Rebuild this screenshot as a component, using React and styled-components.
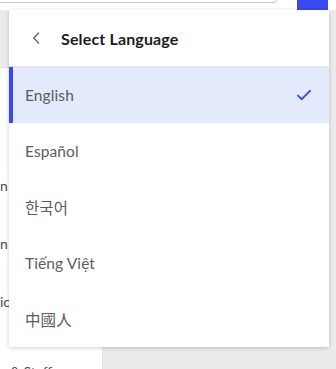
import React from 'react';
import styled, { createGlobalStyle } from 'styled-components';

const GlobalStyle = createGlobalStyle`
	html, body {
		margin: 0;
		padding: 0;
		width: 336px;
		height: 369px;
		overflow: hidden;
		font-family: Lato, "Noto Sans", "Noto Sans CJK KR", "Noto Sans CJK TC", sans-serif;
	}
`;

const Page = styled.div`
	position: relative;
	display: flex;
	flex-direction: column;
	width: 336px;
	height: 369px;
	background-color: #ebebeb;
	overflow: hidden;
`;

const TopBar = styled.div`
	display: flex;
	align-items: flex-end;
	gap: 20px;
	height: 10px;
	background-color: #ffffff;
	overflow: hidden;
	flex-shrink: 0;
`;

const SearchInput = styled.div`
	width: 281px;
	height: 30px;
	margin-left: -4px;
	margin-bottom: 7px;
	border: 1px solid #c8c8c8;
	border-radius: 3px;
	box-sizing: border-box;
`;

const SaveButton = styled.div`
	width: 31px;
	height: 30px;
	background-color: #3a48f2;
	border-radius: 2px 2px 0 0;
`;

const Body = styled.div`
	display: flex;
	flex: 1;
	flex-direction: column;
	padding-top: 57px;
`;

const Sidebar = styled.ul`
	flex: 1;
	width: 102px;
	margin: 0;
	padding: 30px 0 0;
	list-style: none;
	background-color: #ffffff;
	border-top: 1px solid #dcdcdc;
	border-right: 1px solid #e2e2e2;
`;

const SidebarItem = styled.li`
	height: 58px;
	display: flex;
	align-items: center;
	margin-top: ${(props) => (props.gap ? '12px' : '0')};
	padding-left: ${(props) => props.indent}px;
	font-size: 14px;
	color: #4a4a4a;
	white-space: nowrap;
`;

const Menu = styled.div`
	position: absolute;
	top: 10px;
	left: 9px;
	width: 320px;
	background-color: #ffffff;
	border-radius: 0 0 3px 3px;
	box-shadow: 0 1px 4px rgba(0, 0, 0, 0.2);
`;

const MenuHeader = styled.div`
	display: flex;
	align-items: center;
	height: 57px;
	padding-left: 20px;
	border-bottom: 1px solid #e3e3e3;
	box-sizing: border-box;
`;

const BackButton = styled.button`
	display: flex;
	align-items: center;
	justify-content: center;
	width: 14px;
	height: 20px;
	margin-right: 18px;
	padding: 0;
	border: 0;
	background: none;
	color: #707070;
`;

const Title = styled.h2`
	margin: 0;
	font-size: 16px;
	font-weight: 700;
	color: #1c1c1c;
	letter-spacing: 0.15px;
`;

const LanguageList = styled.ul`
	margin: 0;
	padding: 0;
	list-style: none;
`;

const LanguageItem = styled.li`
	display: flex;
	align-items: center;
	justify-content: space-between;
	height: 56px;
	padding: 0 17px 0 12px;
	border-left: 4px solid ${(props) => (props.selected ? '#3a48f2' : 'transparent')};
	background-color: ${(props) => (props.selected ? '#e2eafc' : '#ffffff')};
	font-size: 15.5px;
	color: #5c5c5c;
	letter-spacing: 0.1px;
	cursor: pointer;
`;

const Check = styled.svg`
	width: 16px;
	height: 16px;
	color: #3a48f2;
`;

const LANGUAGES = ['English', 'Español', '한국어', 'Tiếng Việt', '中國人'];

const SIDEBAR = [
	{ label: 'Settings', indent: 14 },
	{ label: 'n Settings', indent: 0 },
	{ label: 'n / Team', indent: 0 },
	{ label: 'ic Profile', indent: 0 },
	{ label: '& Staff', indent: 10, gap: true },
];

export default function App() {
	const selected = 'English';

	return (
		<>
			<GlobalStyle />
			<Page>
				<TopBar>
					<SearchInput />
					<SaveButton />
				</TopBar>
				<Body>
					<Sidebar>
						{SIDEBAR.map((item) => (
							<SidebarItem key={item.label} indent={item.indent} gap={item.gap}>
								{item.label}
							</SidebarItem>
						))}
					</Sidebar>
				</Body>
				<Menu>
					<MenuHeader>
						<BackButton aria-label="Back">
							<svg width="8" height="12" viewBox="0 0 8 12" fill="none">
								<path d="M6.5 1L1.8 6l4.7 5" stroke="currentColor" strokeWidth="1.6" strokeLinecap="round" strokeLinejoin="round" />
							</svg>
						</BackButton>
						<Title>Select Language</Title>
					</MenuHeader>
					<LanguageList>
						{LANGUAGES.map((lang) => (
							<LanguageItem key={lang} selected={lang === selected}>
								{lang}
								{lang === selected && (
									<Check viewBox="0 0 16 16" fill="none">
										<path d="M2 8.6l3.8 3.6L14 3.8" stroke="currentColor" strokeWidth="1.9" strokeLinecap="round" strokeLinejoin="round" />
									</Check>
								)}
							</LanguageItem>
						))}
					</LanguageList>
				</Menu>
			</Page>
		</>
	);
}
